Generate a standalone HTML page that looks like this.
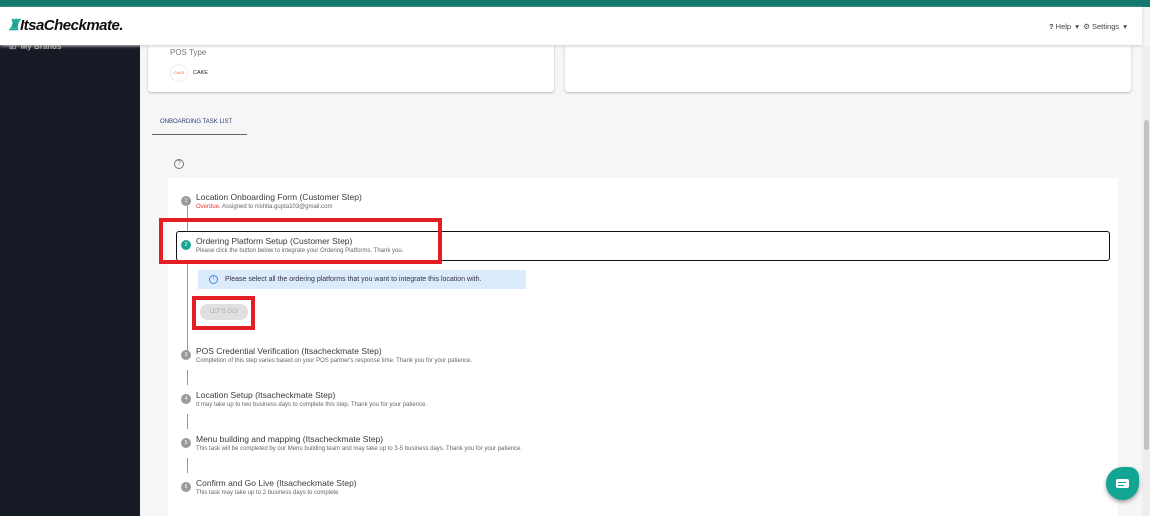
<!DOCTYPE html><html><head><style>
*{margin:0;padding:0;box-sizing:border-box}
body{width:1150px;height:516px;overflow:hidden;background:#f6f6f6;font-family:"Liberation Sans",sans-serif;position:relative;color:#333}
.a{position:absolute}
.t{font-size:8.5px;color:#3a3a3a;white-space:nowrap}
.s{font-size:6px;color:#666;white-space:nowrap}
.c{width:10px;height:10px;border-radius:50%;background:#9a9a9a;color:#fff;font-size:5px;text-align:center;line-height:10px}
.ln{width:1px;background:#999}
</style></head><body>
<div class="a" style="left:0;top:0;width:1150px;height:7px;background:#117a6c"></div>
<div class="a" style="left:0;top:44px;width:140px;height:472px;background:#151a24"></div>
<div class="a" style="left:9px;top:42px;font-size:8px;color:#aaa;font-weight:bold">☑ &nbsp;My Brands</div>
<div class="a" style="left:148px;top:40px;width:406px;height:52px;background:#fff;border-radius:3px;box-shadow:0 1px 2px #bbb"></div>
<div class="a" style="left:565px;top:40px;width:566px;height:52px;background:#fff;border-radius:3px;box-shadow:0 1px 2px #bbb"></div>
<div class="a" style="left:170px;top:48px;font-size:8px;color:#777">POS Type</div>
<div class="a" style="left:170px;top:64px;width:18px;height:18px;border-radius:50%;border:1px solid #eee;font-size:4px;color:#f06a3a;text-align:center;line-height:16px">CAKE</div>
<div class="a" style="left:193px;top:70px;font-size:5.5px;color:#222">CAKE</div>
<div class="a" style="left:0;top:7px;width:1142px;height:38px;background:#fff;box-shadow:0 1px 3px #ccc"></div>
<div class="a" style="left:7px;top:16px;font-size:15px;font-style:italic;font-weight:bold;color:#111;letter-spacing:-0.5px"><span style="color:#1aa592">♜</span>ItsaCheckmate.</div>
<div class="a" style="left:1049px;top:22px;font-size:7.5px;color:#444"><b>?</b> Help &nbsp;▾ &nbsp;⚙ Settings &nbsp;▾</div>
<div class="a" style="left:1142px;top:46px;width:8px;height:470px;background:#eee"></div>
<div class="a" style="left:1144px;top:120px;width:5px;height:330px;background:#c2c2c2;border-radius:3px"></div>
<div class="a" style="left:160px;top:119px;font-size:6px;color:#2c3e70">ONBOARDING TASK LIST</div>
<div class="a" style="left:152px;top:134px;width:95px;height:1px;background:#666"></div>
<div class="a" style="left:174px;top:159px;width:10px;height:10px;border:1px solid #777;border-radius:50%;font-size:7px;text-align:center;line-height:8px;color:#777">?</div>
<div class="a" style="left:168px;top:178px;width:950px;height:338px;background:#fff"></div>
<div class="a ln" style="left:187px;top:206px;height:25px"></div>
<div class="a ln" style="left:187px;top:261px;height:90px"></div>
<div class="a ln" style="left:187px;top:370px;height:15px"></div>
<div class="a ln" style="left:187px;top:414px;height:15px"></div>
<div class="a ln" style="left:187px;top:458px;height:15px"></div>
<div class="a c" style="left:181px;top:196px">1</div>
<div class="a t" style="left:196px;top:192px">Location Onboarding Form (Customer Step)</div>
<div class="a s" style="left:196px;top:204px"><span style="color:#e33">Overdue.</span> Assigned to nishita.gupta103@gmail.com</div>
<div class="a" style="left:176px;top:231px;width:934px;height:30px;border:1.5px solid #111;border-radius:3px"></div>
<div class="a c" style="left:181px;top:240px;background:#1aa592">2</div>
<div class="a t" style="left:196px;top:236px">Ordering Platform Setup (Customer Step)</div>
<div class="a s" style="left:196px;top:248px">Please click the button below to integrate your Ordering Platforms. Thank you.</div>
<div class="a" style="left:198px;top:270px;width:328px;height:19px;background:#dcebfb"></div>
<div class="a" style="left:209px;top:275px;width:9px;height:9px;border:1px solid #3b8de0;border-radius:50%;font-size:6px;color:#3b8de0;text-align:center;line-height:7px">!</div>
<div class="a" style="left:225px;top:276px;font-size:7px;color:#334">Please select all the ordering platforms that you want to integrate this location with.</div>
<div class="a" style="left:200px;top:304px;width:48px;height:16px;background:#e0e0e0;border-radius:8px;font-size:6px;color:#aaa;text-align:center;line-height:16px">LET'S GO!</div>
<div class="a" style="left:159px;top:218px;width:283px;height:46px;border:4px solid #e31e25"></div>
<div class="a" style="left:192px;top:296px;width:63px;height:34px;border:4px solid #e31e25"></div>
<div class="a c" style="left:181px;top:350px">3</div>
<div class="a t" style="left:196px;top:346px">POS Credential Verification (Itsacheckmate Step)</div>
<div class="a s" style="left:196px;top:358px">Completion of this step varies based on your POS partner's response time. Thank you for your patience.</div>
<div class="a c" style="left:181px;top:394px">4</div>
<div class="a t" style="left:196px;top:390px">Location Setup (Itsacheckmate Step)</div>
<div class="a s" style="left:196px;top:402px">It may take up to two business days to complete this step. Thank you for your patience.</div>
<div class="a c" style="left:181px;top:438px">5</div>
<div class="a t" style="left:196px;top:434px">Menu building and mapping (Itsacheckmate Step)</div>
<div class="a s" style="left:196px;top:446px">This task will be completed by our Menu building team and may take up to 3-5 business days. Thank you for your patience.</div>
<div class="a c" style="left:181px;top:482px">6</div>
<div class="a t" style="left:196px;top:478px">Confirm and Go Live (Itsacheckmate Step)</div>
<div class="a s" style="left:196px;top:490px">This task may take up to 2 business days to complete</div>
<div class="a" style="left:1106px;top:467px;width:33px;height:33px;background:#13a594;border-radius:50% 30% 50% 50%;box-shadow:0 2px 4px #999"></div>
<div class="a" style="left:1116px;top:479px;width:13px;height:9px;background:#fff;border-radius:2px"></div>
<div class="a" style="left:1118px;top:482px;width:8px;height:1px;background:#13a594"></div>
<div class="a" style="left:1118px;top:485px;width:6px;height:1px;background:#13a594"></div>
</body></html>
